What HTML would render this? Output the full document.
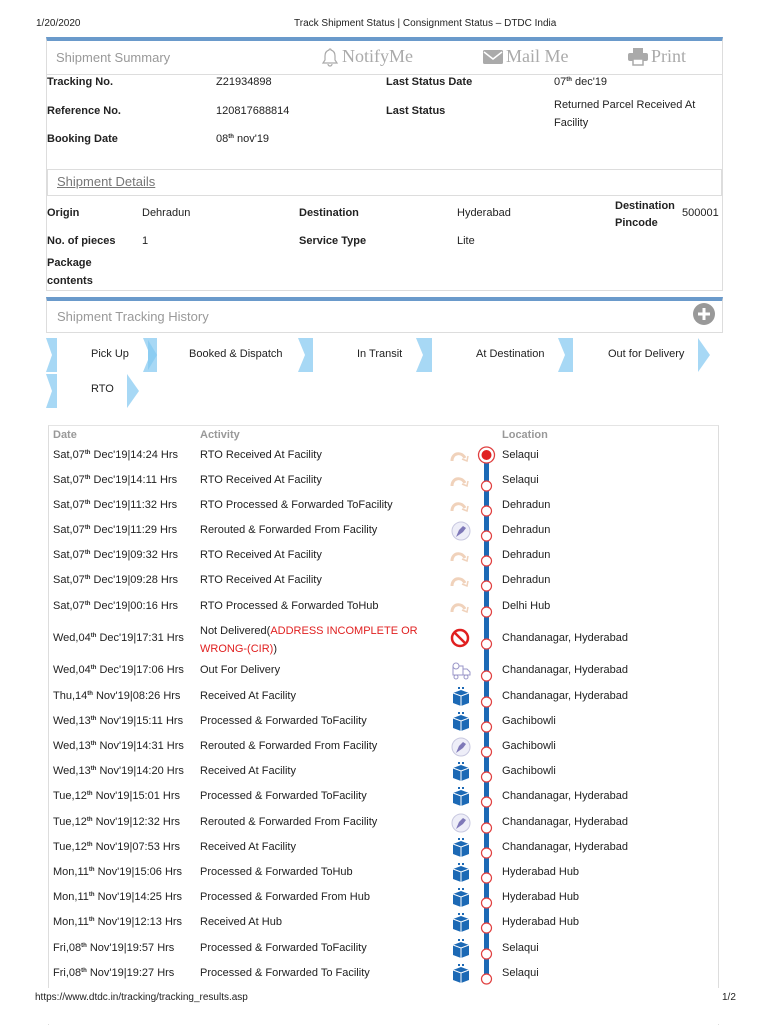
<!DOCTYPE html>
<html><head><meta charset="utf-8"><style>
*{margin:0;padding:0;box-sizing:border-box}
body{width:768px;height:1024px;background:#fff;font-family:"Liberation Sans",sans-serif;font-size:11px;color:#222;position:relative;overflow:hidden}
.a{position:absolute;white-space:nowrap}
b{font-weight:bold}
sup{font-size:6px;font-weight:bold;vertical-align:4px}
.hd{color:#999;font-size:13px}
.serif{font-family:"Liberation Serif",serif;font-size:18px;color:#aaa}
.chev{position:absolute;width:0;height:0}
</style></head><body>
<div class="a" style="left:36px;top:18px;font-size:10px">1/20/2020</div>
<div class="a" style="left:294px;top:18px;font-size:10px">Track Shipment Status | Consignment Status – DTDC India</div>

<!-- summary box -->
<div class="a" style="left:46px;top:37px;width:677px;height:254px;border:1px solid #ddd;border-top:4px solid #6a9acb"></div>
<div class="a" style="left:47px;top:41px;width:675px;height:34px;border-bottom:1px solid #ddd"></div>
<div class="a hd" style="left:56px;top:50px">Shipment Summary</div>
<svg class="a" style="left:321px;top:47px" width="18" height="20" viewBox="0 0 18 20"><path d="M9 2a1 1 0 0 1 1 1c3 1 4 3 4 6v4l2 3H2l2-3V9c0-3 1-5 4-6a1 1 0 0 1 1-1zM7 17a2 2 0 0 0 4 0" fill="none" stroke="#aaa" stroke-width="1.2"/></svg>
<div class="a serif" style="left:342px;top:46px">NotifyMe</div>
<svg class="a" style="left:483px;top:49px" width="20" height="16" viewBox="0 0 20 16"><rect x="0" y="1" width="20" height="14" rx="1.5" fill="#aaa"/><path d="M1 3l9 7 9-7" fill="none" stroke="#fff" stroke-width="1.5"/></svg>
<div class="a serif" style="left:506px;top:46px">Mail Me</div>
<svg class="a" style="left:628px;top:48px" width="20" height="18" viewBox="0 0 20 18"><rect x="5" y="0" width="10" height="5" fill="#aaa"/><rect x="0" y="5" width="20" height="8" rx="2" fill="#aaa"/><rect x="5" y="11" width="10" height="6" fill="#fff" stroke="#aaa" stroke-width="1.5"/></svg>
<div class="a serif" style="left:651px;top:46px">Print</div>

<div class="a" style="left:47px;top:76px"><b>Tracking No.</b></div>
<div class="a" style="left:216px;top:76px">Z21934898</div>
<div class="a" style="left:386px;top:76px"><b>Last Status Date</b></div>
<div class="a" style="left:554px;top:76px">07<sup>th</sup> dec'19</div>
<div class="a" style="left:47px;top:105px"><b>Reference No.</b></div>
<div class="a" style="left:216px;top:105px">120817688814</div>
<div class="a" style="left:386px;top:105px"><b>Last Status</b></div>
<div class="a" style="left:554px;top:96px;line-height:18px;white-space:normal;width:160px">Returned Parcel Received At Facility</div>
<div class="a" style="left:47px;top:133px"><b>Booking Date</b></div>
<div class="a" style="left:216px;top:133px">08<sup>th</sup> nov'19</div>

<div class="a" style="left:47px;top:169px;width:675px;height:27px;border:1px solid #ddd;border-left:1px solid #ddd"></div>
<div class="a hd" style="left:57px;top:174px;text-decoration:underline;color:#777">Shipment Details</div>
<div class="a" style="left:47px;top:207px"><b>Origin</b></div>
<div class="a" style="left:142px;top:207px">Dehradun</div>
<div class="a" style="left:299px;top:207px"><b>Destination</b></div>
<div class="a" style="left:457px;top:207px">Hyderabad</div>
<div class="a" style="left:615px;top:198px;line-height:17px"><b>Destination<br>Pincode</b></div>
<div class="a" style="left:682px;top:207px">500001</div>
<div class="a" style="left:47px;top:235px"><b>No. of pieces</b></div>
<div class="a" style="left:142px;top:235px">1</div>
<div class="a" style="left:299px;top:235px"><b>Service Type</b></div>
<div class="a" style="left:457px;top:235px">Lite</div>
<div class="a" style="left:47px;top:254px;line-height:18px"><b>Package<br>contents</b></div>

<!-- tracking history -->
<div class="a" style="left:46px;top:297px;width:677px;height:36px;border:1px solid #ddd;border-top:4px solid #6a9acb"></div>
<div class="a hd" style="left:57px;top:309px">Shipment Tracking History</div>
<svg class="a" style="left:692px;top:302px" width="24" height="24"><circle cx="12" cy="12" r="11" fill="#999"/><path d="M12 6v12M6 12h12" stroke="#fff" stroke-width="3"/></svg>

<!-- step chevrons -->
<svg class="a" style="left:0;top:338px" width="768" height="72">
<g fill="#a7d8f5">
<polygon points="46,0 57,0 57,34 46,34 52,17"/>
<polygon points="143,0 157,0 157,34 143,34 150,17" /><polygon points="148,2 157,17 148,32" fill="#8ccdf2"/>
<polygon points="298,0 313,0 313,34 298,34 305,17"/>
<polygon points="416,0 432,0 432,34 416,34 423,17"/>
<polygon points="558,0 573,0 573,34 558,34 565,17"/>
<polygon points="698,0 710,17 698,34"/>
<polygon points="46,36 57,36 57,70 46,70 52,53"/>
<polygon points="127,36 139,53 127,70"/>
</g>
</svg>
<div class="a" style="left:91px;top:348px">Pick Up</div>
<div class="a" style="left:189px;top:348px">Booked &amp; Dispatch</div>
<div class="a" style="left:357px;top:348px">In Transit</div>
<div class="a" style="left:476px;top:348px">At Destination</div>
<div class="a" style="left:608px;top:348px">Out for Delivery</div>
<div class="a" style="left:91px;top:383px">RTO</div>

<!-- table -->
<div class="a" style="left:48px;top:425px;width:671px;height:600px;border-left:1px solid #ddd;border-right:1px solid #ddd;border-top:1px solid #e4e4e4"></div>
<div class="a" style="left:53px;top:429px;color:#999"><b>Date</b></div>
<div class="a" style="left:200px;top:429px;color:#999"><b>Activity</b></div>
<div class="a" style="left:502px;top:429px;color:#999"><b>Location</b></div>

<svg class="a" style="left:0;top:0" width="768" height="1024">
<defs>
<g id="rto"><path d="M-8 5c0-8 9-10 13-3" fill="none" stroke="#f0d2bb" stroke-width="3"/><path d="M2 3l5 2 1-5" fill="none" stroke="#f0d2bb" stroke-width="1.5"/></g>
<g id="rr"><circle r="9" fill="#eeeef8" stroke="#c8c8e0"/><path d="M-5 6l3-7 4-4 3 2-3 4z" fill="#7e78b8"/></g>
<g id="bx"><path d="M-8 -4l8-3 8 3v10l-8 3-8-3z" fill="#1c69b5"/><path d="M-8 -4l8 3 8-3M0 -1v12" stroke="#fff" stroke-width="1" fill="none"/><rect x="-3" y="-10" width="2" height="2" fill="#1c69b5"/><rect x="1" y="-10" width="2" height="2" fill="#1c69b5"/></g>
<g id="tr"><rect x="-8" y="-5" width="10" height="9" fill="none" stroke="#9a96c8"/><path d="M2 -2h4l3 3v3h-7z" fill="none" stroke="#9a96c8"/><circle cx="-5" cy="6" r="2" fill="#fff" stroke="#9a96c8"/><circle cx="5" cy="6" r="2" fill="#fff" stroke="#9a96c8"/><circle cx="-5" cy="-5" r="3" fill="#fff" stroke="#9a96c8"/></g>
<g id="no"><circle r="8" fill="none" stroke="#e02020" stroke-width="2.5"/><path d="M-5.5 -5.5l11 11" stroke="#e02020" stroke-width="2.5"/></g>
<circle id="c" r="5" fill="#fff" stroke="#e04040" stroke-width="1.2"/>
</defs>
<rect x="484" y="455" width="5" height="522" fill="#1c69b5"/>
<circle cx="486.5" cy="455" r="8" fill="#fff" stroke="#e04040" stroke-width="1.3"/><circle cx="486.5" cy="455" r="5" fill="#e02020"/>
<use href="#rto" x="460" y="456"/><use href="#rto" x="460" y="481"/><use href="#rto" x="460" y="506"/>
<use href="#rr" x="461" y="531"/>
<use href="#rto" x="460" y="556"/><use href="#rto" x="460" y="581"/><use href="#rto" x="460" y="607"/>
<use href="#no" x="460" y="638"/>
<use href="#tr" x="461" y="671"/>
<use href="#bx" x="461" y="697"/><use href="#bx" x="461" y="722"/>
<use href="#rr" x="461" y="747"/>
<use href="#bx" x="461" y="772"/><use href="#bx" x="461" y="797"/>
<use href="#rr" x="461" y="823"/>
<use href="#bx" x="461" y="848"/><use href="#bx" x="461" y="873"/><use href="#bx" x="461" y="898"/><use href="#bx" x="461" y="923"/><use href="#bx" x="461" y="949"/><use href="#bx" x="461" y="974"/>
<use href="#c" x="486.5" y="486"/><use href="#c" x="486.5" y="511"/><use href="#c" x="486.5" y="536"/><use href="#c" x="486.5" y="561"/><use href="#c" x="486.5" y="586"/><use href="#c" x="486.5" y="612"/><use href="#c" x="486.5" y="644"/><use href="#c" x="486.5" y="676"/><use href="#c" x="486.5" y="702"/><use href="#c" x="486.5" y="727"/><use href="#c" x="486.5" y="752"/><use href="#c" x="486.5" y="777"/><use href="#c" x="486.5" y="802"/><use href="#c" x="486.5" y="828"/><use href="#c" x="486.5" y="853"/><use href="#c" x="486.5" y="878"/><use href="#c" x="486.5" y="903"/><use href="#c" x="486.5" y="928"/><use href="#c" x="486.5" y="954"/><use href="#c" x="486.5" y="979"/>
</svg>

<div class="a" style="left:53px;top:449px">Sat,07<sup>th</sup> Dec'19|14:24 Hrs</div><div class="a" style="left:200px;top:449px">RTO Received At Facility</div><div class="a" style="left:502px;top:449px">Selaqui</div>
<div class="a" style="left:53px;top:474px">Sat,07<sup>th</sup> Dec'19|14:11 Hrs</div><div class="a" style="left:200px;top:474px">RTO Received At Facility</div><div class="a" style="left:502px;top:474px">Selaqui</div>
<div class="a" style="left:53px;top:499px">Sat,07<sup>th</sup> Dec'19|11:32 Hrs</div><div class="a" style="left:200px;top:499px">RTO Processed &amp; Forwarded ToFacility</div><div class="a" style="left:502px;top:499px">Dehradun</div>
<div class="a" style="left:53px;top:524px">Sat,07<sup>th</sup> Dec'19|11:29 Hrs</div><div class="a" style="left:200px;top:524px">Rerouted &amp; Forwarded From Facility</div><div class="a" style="left:502px;top:524px">Dehradun</div>
<div class="a" style="left:53px;top:549px">Sat,07<sup>th</sup> Dec'19|09:32 Hrs</div><div class="a" style="left:200px;top:549px">RTO Received At Facility</div><div class="a" style="left:502px;top:549px">Dehradun</div>
<div class="a" style="left:53px;top:574px">Sat,07<sup>th</sup> Dec'19|09:28 Hrs</div><div class="a" style="left:200px;top:574px">RTO Received At Facility</div><div class="a" style="left:502px;top:574px">Dehradun</div>
<div class="a" style="left:53px;top:600px">Sat,07<sup>th</sup> Dec'19|00:16 Hrs</div><div class="a" style="left:200px;top:600px">RTO Processed &amp; Forwarded ToHub</div><div class="a" style="left:502px;top:600px">Delhi Hub</div>
<div class="a" style="left:53px;top:632px">Wed,04<sup>th</sup> Dec'19|17:31 Hrs</div><div class="a" style="left:200px;top:622px;line-height:18px">Not Delivered(<span style="color:#e02020">ADDRESS INCOMPLETE OR<br>WRONG-(CIR)</span>)</div><div class="a" style="left:502px;top:632px">Chandanagar, Hyderabad</div>
<div class="a" style="left:53px;top:664px">Wed,04<sup>th</sup> Dec'19|17:06 Hrs</div><div class="a" style="left:200px;top:664px">Out For Delivery</div><div class="a" style="left:502px;top:664px">Chandanagar, Hyderabad</div>
<div class="a" style="left:53px;top:690px">Thu,14<sup>th</sup> Nov'19|08:26 Hrs</div><div class="a" style="left:200px;top:690px">Received At Facility</div><div class="a" style="left:502px;top:690px">Chandanagar, Hyderabad</div>
<div class="a" style="left:53px;top:715px">Wed,13<sup>th</sup> Nov'19|15:11 Hrs</div><div class="a" style="left:200px;top:715px">Processed &amp; Forwarded ToFacility</div><div class="a" style="left:502px;top:715px">Gachibowli</div>
<div class="a" style="left:53px;top:740px">Wed,13<sup>th</sup> Nov'19|14:31 Hrs</div><div class="a" style="left:200px;top:740px">Rerouted &amp; Forwarded From Facility</div><div class="a" style="left:502px;top:740px">Gachibowli</div>
<div class="a" style="left:53px;top:765px">Wed,13<sup>th</sup> Nov'19|14:20 Hrs</div><div class="a" style="left:200px;top:765px">Received At Facility</div><div class="a" style="left:502px;top:765px">Gachibowli</div>
<div class="a" style="left:53px;top:790px">Tue,12<sup>th</sup> Nov'19|15:01 Hrs</div><div class="a" style="left:200px;top:790px">Processed &amp; Forwarded ToFacility</div><div class="a" style="left:502px;top:790px">Chandanagar, Hyderabad</div>
<div class="a" style="left:53px;top:816px">Tue,12<sup>th</sup> Nov'19|12:32 Hrs</div><div class="a" style="left:200px;top:816px">Rerouted &amp; Forwarded From Facility</div><div class="a" style="left:502px;top:816px">Chandanagar, Hyderabad</div>
<div class="a" style="left:53px;top:841px">Tue,12<sup>th</sup> Nov'19|07:53 Hrs</div><div class="a" style="left:200px;top:841px">Received At Facility</div><div class="a" style="left:502px;top:841px">Chandanagar, Hyderabad</div>
<div class="a" style="left:53px;top:866px">Mon,11<sup>th</sup> Nov'19|15:06 Hrs</div><div class="a" style="left:200px;top:866px">Processed &amp; Forwarded ToHub</div><div class="a" style="left:502px;top:866px">Hyderabad Hub</div>
<div class="a" style="left:53px;top:891px">Mon,11<sup>th</sup> Nov'19|14:25 Hrs</div><div class="a" style="left:200px;top:891px">Processed &amp; Forwarded From Hub</div><div class="a" style="left:502px;top:891px">Hyderabad Hub</div>
<div class="a" style="left:53px;top:916px">Mon,11<sup>th</sup> Nov'19|12:13 Hrs</div><div class="a" style="left:200px;top:916px">Received At Hub</div><div class="a" style="left:502px;top:916px">Hyderabad Hub</div>
<div class="a" style="left:53px;top:942px">Fri,08<sup>th</sup> Nov'19|19:57 Hrs</div><div class="a" style="left:200px;top:942px">Processed &amp; Forwarded ToFacility</div><div class="a" style="left:502px;top:942px">Selaqui</div>
<div class="a" style="left:53px;top:967px">Fri,08<sup>th</sup> Nov'19|19:27 Hrs</div><div class="a" style="left:200px;top:967px">Processed &amp; Forwarded To Facility</div><div class="a" style="left:502px;top:967px">Selaqui</div>

<div class="a" style="left:0;top:988px;width:768px;height:36px;background:#fff"></div>
<div class="a" style="left:35px;top:992px;font-size:10px">https://www.dtdc.in/tracking/tracking_results.asp</div>
<div class="a" style="left:722px;top:992px;font-size:10px">1/2</div>
</body></html>
